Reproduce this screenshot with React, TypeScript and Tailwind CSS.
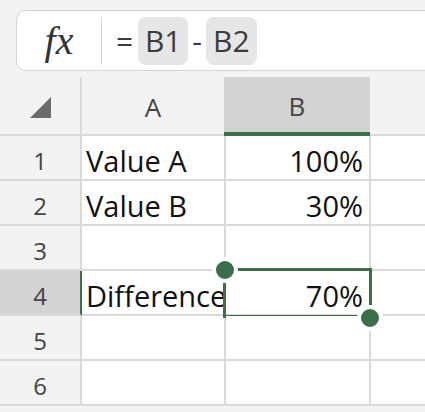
import React from "react";

const GREEN = "#3a6f4a";

type Row = { n: number; a?: string; b?: string };

const rows: Row[] = [
  { n: 1, a: "Value A", b: "100%" },
  { n: 2, a: "Value B", b: "30%" },
  { n: 3 },
  { n: 4, a: "Difference", b: "70%" },
  { n: 5 },
  { n: 6 },
];

function Handle({ className }: { className: string }) {
  return (
    <span
      className={`absolute z-10 h-[26px] w-[26px] rounded-full border-4 border-white bg-[#3a6f4a] ${className}`}
    />
  );
}

export default function App() {
  return (
    <div
      className="h-[412px] w-[425px] overflow-hidden bg-[#f3f3f3]"
      style={{ fontFamily: '"Open Sans", "Noto Sans", sans-serif' }}
    >
      {/* formula bar */}
      <div className="pl-[16px] pt-[10px]">
        <div className="flex h-[61px] w-[440px] items-center rounded-[10px] border border-[#d4d4d4] bg-white">
          <div className="flex w-[84px] items-center justify-center">
            <span
              className="text-[40px] italic leading-none text-[#333]"
              style={{ fontFamily: '"Liberation Serif", "DejaVu Serif", serif' }}
            >
              fx
            </span>
          </div>
          <div className="h-[48px] w-px bg-[#d9d9d9]" />
          <div className="flex items-center pl-[14px] text-[30px] leading-none text-[#3b3b3b]">
            <span>=</span>
            <span className="ml-[5px] flex h-[48px] w-[50px] items-center justify-center rounded-[8px] bg-[#e6e6e6]">B1</span>
            <span className="mx-[4px]">-</span>
            <span className="flex h-[48px] w-[51px] items-center justify-center rounded-[8px] bg-[#e6e6e6]">B2</span>
          </div>
        </div>
      </div>

      {/* grid */}
      <div className="mt-[6px]">
        <div className="flex h-[59px] text-[26px] text-[#444]">
          <div className="flex w-[82px] items-center justify-center border-r-2 border-b-2 border-[#dadada] pt-[4px]">
            <svg width="22" height="22" viewBox="0 0 22 22" className="ml-[2px]">
              <polygon points="21,0 21,21 0,21" fill="#6b6b6b" />
            </svg>
          </div>
          <div className="flex w-[142px] items-center justify-center border-b-2 border-[#dadada] pt-[4px]">A</div>
          <div className="flex w-[146px] items-center justify-center border-b-4 border-[#3a6f4a] bg-[#d3d3d3] pt-[4px]">B</div>
          <div className="flex-1 border-b-2 border-[#dadada]" />
        </div>

        {rows.map((r) => {
          const sel = r.n === 4;
          return (
            <div key={r.n} className="flex h-[45px]">
              <div
                className={`flex w-[82px] items-center justify-center border-b-2 border-r-2 border-b-[#dadada] pt-[6px] text-[24px] text-[#444] ${
                  sel ? "border-r-[#3a6f4a] bg-[#d3d3d3]" : "border-r-[#dadada]"
                }`}
              >
                {r.n}
              </div>
              <div className="flex w-[144px] items-center overflow-hidden whitespace-nowrap border-b-2 border-r-2 border-[#dadada] bg-white pl-[4px] pt-[6px] text-[29px] text-[#111]">
                {r.a}
              </div>
              <div className="relative flex w-[145px] items-center justify-end border-b-2 border-r-2 border-[#dadada] bg-white pr-[6px] pt-[6px] text-[29px] text-[#111]">
                {r.b}
                {sel && (
                  <>
                    <span
                      className="absolute -top-[3px] -bottom-[4px] -left-[3px] -right-[3px] border-[3px]"
                      style={{ borderColor: GREEN }}
                    />
                    <Handle className="-left-[14px] -top-[14px]" />
                    <Handle className="-right-[14px] -bottom-[17px]" />
                  </>
                )}
              </div>
              <div className="flex-1 border-b-2 border-[#dadada] bg-white" />
            </div>
          );
        })}
      </div>
    </div>
  );
}
